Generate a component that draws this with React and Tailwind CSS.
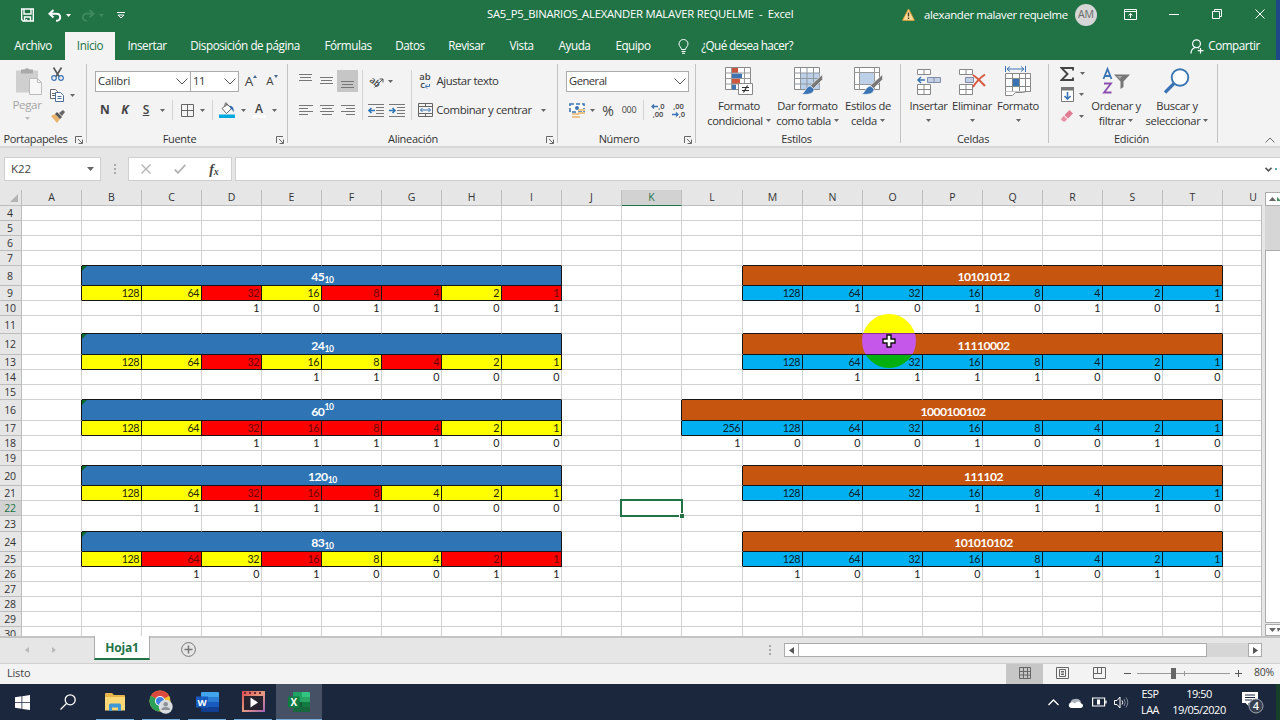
const COLS = 'ABCDEFGHIJKLMNOPQRSTU'.split('');
const colWidth = (c) => (c === 'L' ? 61 : c === 'U' ? 39 : 60);

const ROW_HEIGHTS = {
  8: 20, 11: 18, 12: 21, 16: 21, 20: 20, 23: 16, 24: 20,
};
const ROWS = Array.from({ length: 27 }, (_, i) => i + 4);
const rowHeight = (r) => ROW_HEIGHTS[r] || 15;

// each block: a merged title, the powers of two and the bits below them
const BLOCKS = [
  { row: 8, from: 'B', to: 'I', num: '45', sub: '10', red: 'DFGI', bits: '101101' },
  { row: 12, from: 'B', to: 'I', num: '24', sub: '10', red: 'DG', bits: '11000' },
  { row: 16, from: 'B', to: 'I', num: '60', sup: '10', red: 'DEFG', bits: '111100' },
  { row: 20, from: 'B', to: 'I', num: '120', sub: '10', red: 'DEF', bits: '1111000' },
  { row: 24, from: 'B', to: 'I', num: '83', sub: '10', red: 'CEHI', bits: '1010011' },
  { row: 8, from: 'M', to: 'T', num: '10101012', bits: '1010101' },
  { row: 12, from: 'M', to: 'T', num: '11110002', bits: '1111000' },
  { row: 16, from: 'L', to: 'T', num: '1000100102', bits: '100010010' },
  { row: 20, from: 'M', to: 'T', num: '111102', bits: '11110' },
  { row: 24, from: 'M', to: 'T', num: '101010102', bits: '10101010' },
];

const CELLS = {};
BLOCKS.forEach((b) => {
  const start = COLS.indexOf(b.from);
  const end = COLS.indexOf(b.to);
  const left = b.from === 'B';
  for (let i = start; i <= end; i++) {
    const c = COLS[i];
    const isRed = left && b.red.includes(c);
    CELLS[c + b.row] = { block: b, title: true, first: i === start };
    CELLS[c + (b.row + 1)] = {
      block: b,
      text: String(2 ** (end - i)),
      cls: isRed ? 'bg-[#fe0000] text-[#6b0505]' : left ? 'bg-[#ffff00] text-[#26260a]' : 'bg-[#00b0f0] text-[#06222e]',
    };
    const bit = b.bits[b.bits.length - 1 - (end - i)];
    if (bit) CELLS[c + (b.row + 2)] = { text: bit, cls: 'text-[#222]' };
  }
});

const spanWidth = (b) =>
  COLS.slice(COLS.indexOf(b.from), COLS.indexOf(b.to) + 1).reduce((sum, c) => sum + colWidth(c), 0);

function Caret({ className = 'text-[#666]' }) {
  return (
    <svg width="5" height="3" viewBox="0 0 5 3" className={`shrink-0 ${className}`}>
      <path d="M0 0h5L2.5 3z" fill="currentColor" />
    </svg>
  );
}

function Slot({ w, children, className = '' }) {
  return <div className={`flex shrink-0 items-center justify-center ${w} ${className}`}>{children}</div>;
}

function Divider({ w }) {
  return (
    <Slot w={w}>
      <div className="h-[20px] w-px bg-[#d4d4d4]" />
    </Slot>
  );
}

function Launcher() {
  return (
    <svg width="8" height="8" viewBox="0 0 8 8" fill="none" stroke="#666" className="mt-[4px] shrink-0">
      <path d="M.5 7V.5H7M3 3l4 4M7.500 3.500v4h-4" />
    </svg>
  );
}

function Group({ w, label, labelPad, launcher, children }) {
  return (
    <div className={`flex h-[79px] shrink-0 flex-col border-r border-[#c3c3c3] ${w}`}>
      <div className="h-[68px]">{children}</div>
      <div className="flex h-[11px] items-start justify-between pr-[3px] leading-[14px] text-[#333]">
        <div className={`flex-1 text-center whitespace-nowrap text-[11px] tracking-[-0.300px] ${labelPad}`}>{label}</div>
        {launcher && <Launcher />}
      </div>
    </div>
  );
}

function BigButton({ w, icon, line1, line2 }) {
  return (
    <div className={`flex shrink-0 flex-col items-center text-[11.200px] tracking-[-0.350px] whitespace-nowrap text-[#333] ${w}`}>
      <div className="flex h-[34px] items-center">{icon}</div>
      <div className="h-[15px] leading-[15px]">{line1}</div>
      <div className="flex h-[15px] items-center gap-[3px] leading-[15px]">
        {line2}
        <Caret />
      </div>
    </div>
  );
}

function Lines({ rows }) {
  return (
    <svg width="14" height="14" viewBox="0 0 14 14" stroke="#777" strokeWidth="1">
      {rows.map(([x1, x2, y]) => (
        <path key={y} d={`M${x1} ${y}.5H${x2}`} />
      ))}
    </svg>
  );
}

function Indent({ flip }) {
  return (
    <svg width="16" height="13" viewBox="0 0 16 13" fill="none">
      <path d="M0 .5h16M8 3.500h8M8 6.500h8M8 9.500h8M0 12.500h16" stroke="#777" />
      <path d={flip ? 'M0 6.500h6M3.500 4L6 6.500 3.500 9' : 'M7 6.500H1M3.500 4L1 6.500 3.500 9'} stroke="#2f75b5" strokeWidth="1.600" />
    </svg>
  );
}

function TitleBar() {
  return (
    <div className="flex h-[32px] items-center text-[12px] text-white">
      <div className="flex h-full w-[487px] items-center pb-[2px] pl-[20px]">
        <svg width="15" height="14" viewBox="0 0 15 14" fill="none" stroke="#fff" strokeWidth="1.400">
          <path d="M1.700 1h11.600v12H3l-1.300-1.500zM4 1v5h7V1M4.500 13V9h6v4M6.500 11v2" />
        </svg>
        <svg width="14" height="13" viewBox="0 0 14 13" fill="none" stroke="#fff" strokeWidth="2" className="ml-[13px]">
          <path d="M5.500 1L1.500 4.700l4 3.700M2 4.700h6.500c5 0 5 7-.5 7" />
        </svg>
        <Caret className="ml-[4px] text-white" />
        <svg width="14" height="13" viewBox="0 0 14 13" fill="none" stroke="#3f8a61" strokeWidth="1.800" className="ml-[10px]">
          <path d="M8.500 1l4 3.700-4 3.700M12 4.700H5.500c-5 0-5 7 .5 7" />
        </svg>
        <Caret className="ml-[4px] text-[#3f8a61]" />
        <svg width="8" height="7" viewBox="0 0 8 7" fill="none" stroke="#fff" className="ml-[13px]">
          <path d="M0 .5h8M1 3l3 3 3-3z" />
        </svg>
      </div>
      <div className="w-[306px] text-center text-[11.300px] tracking-[-0.250px] whitespace-nowrap pb-[3px]">
        SA5_P5_BINARIOS_ALEXANDER MALAVER REQUELME&nbsp; - &nbsp;Excel
      </div>
      <svg width="13" height="13" viewBox="0 0 13 13" className="mb-[4px] ml-[109px] shrink-0">
        <path d="M6.500 1L12.300 12.300H.7z" fill="#fbdc9a" stroke="#e8a33d" />
        <path d="M6.500 4.500v4M6.500 9.500v1.500" stroke="#4a3a20" strokeWidth="1.400" />
      </svg>
      <div className="ml-[9px] w-[142px] shrink-0 text-center text-[11.400px] tracking-[-0.350px] whitespace-nowrap pb-[2px]">alexander malaver requelme</div>
      <div className="mb-[3px] ml-[9px] flex size-[22px] shrink-0 items-center justify-center rounded-full bg-[#d6d6d6] text-[10.500px] text-[#6b6b6b]">AM</div>
      <svg width="13" height="11" viewBox="0 0 13 11" fill="none" stroke="#fff" className="mb-[4px] ml-[27px] shrink-0">
        <path d="M.5.5h12v10H.5zM.5 2.500h12M6.500 9V4.500M4.500 6.500l2-2 2 2" />
      </svg>
      <div className="mb-[3px] ml-[32px] h-px w-[10px] shrink-0 bg-white" />
      <svg width="10" height="10" viewBox="0 0 10 10" fill="none" stroke="#fff" className="mb-[4px] ml-[33px] shrink-0">
        <path d="M.5 2.500h7v7h-7zM2.500 2.500v-2h7v7h-2" />
      </svg>
      <svg width="10" height="10" viewBox="0 0 10 10" fill="none" stroke="#fff" className="mb-[4px] ml-[33px] shrink-0">
        <path d="M.5.5l9 9M9.500.5l-9 9" />
      </svg>
    </div>
  );
}

const TABS = [
  ['Archivo', 'w-[64px]'],
  ['Inicio', 'w-[50px] bg-[#f3f3f3] text-[#217346]'],
  ['Insertar', 'w-[64px]'],
  ['Disposición de página', 'w-[132px]'],
  ['Fórmulas', 'w-[74px]'],
  ['Datos', 'w-[50px]'],
  ['Revisar', 'w-[63px]'],
  ['Vista', 'w-[47px]'],
  ['Ayuda', 'w-[59px]'],
  ['Equipo', 'w-[58px]'],
];

function RibbonTabs() {
  return (
    <div className="flex h-[28px] items-center pl-px text-[11.700px] tracking-[-0.450px] text-white">
      {TABS.map(([name, cls]) => (
        <div key={name} className={`flex h-full shrink-0 items-center justify-center whitespace-nowrap ${cls}`}>{name}</div>
      ))}
      <svg width="11" height="15" viewBox="0 0 11 15" fill="none" stroke="#fff" className="ml-[16px] shrink-0">
        <path d="M3.500 10.500C3.500 8.500 1 7.500 1 5a4.500 4.500 0 019 0c0 2.500-2.500 3.500-2.500 5.500zM3.500 12.500h4M4 14.300h3" />
      </svg>
      <div className="ml-[12px] w-[92px] text-center tracking-[-0.600px] whitespace-nowrap">¿Qué desea hacer?</div>
      <svg width="14" height="15" viewBox="0 0 14 15" fill="none" stroke="#fff" strokeWidth="1.200" className="ml-[397px] shrink-0">
        <circle cx="6.500" cy="4.700" r="3.900" />
        <path d="M1 14.500c0-3 1.500-5 4-6M8 8.600l1 .8M10.500 9v5.500M7.700 11.700h5.800" />
      </svg>
      <div className="ml-[4px] w-[52px] text-center">Compartir</div>
    </div>
  );
}

function TableIcon({ kind }) {
  return (
    <svg width="30" height="30" viewBox="0 0 30 30" fill="none">
      <path d="M1.500 1.500h25v22h-25z" fill="#fff" stroke="#888" />
      {kind === 'cond' && (
        <>
          <path d="M8 2h6v5H8z" fill="#c8553d" />
          <path d="M8 7.500h10v5H8z" fill="#3f74b0" />
          <path d="M8 13h8v5H8z" fill="#d0583f" />
          <path d="M8 18.500h4v5H8z" fill="#3f74b0" />
          <path d="M1.500 7h25M1.500 12.500h25M1.500 18h25M7.500 1.500v22M20.500 1.500v22" stroke="#999" />
          <path d="M14.500 17.500h14v11h-14z" fill="#fff" stroke="#888" />
          <path d="M18 21.500h7M18 24.500h7M23.500 19.500l-4 7" stroke="#333" strokeWidth="1.200" />
        </>
      )}
      {kind === 'table' && (
        <>
          <path d="M7.500 7h19v16h-19z" fill="#bcd0ea" />
          <path d="M1.500 7h25M1.500 12.500h25M1.500 18h25M7.500 1.500v22M14 1.500v22M20.500 1.500v22" stroke="#8f979f" />
        </>
      )}
      {kind === 'style' && (
        <>
          <path d="M6.500 6.500h15v12h-15z" fill="#bcd0ea" />
          <path d="M1.500 6.500h25M1.500 18.500h25M6.500 1.500v22M21.500 1.500v22" stroke="#999" />
        </>
      )}
      {kind !== 'cond' && (
        <>
          <path d="M29.500 8.500v5l-9 9-3-3z" fill="#777" stroke="#f3f3f3" strokeWidth=".6" />
          <path d="M17.500 20l3.500 3c0 5-7 6-12.500 5 4-1 3.500-7 9-8z" fill="#3a74b4" stroke="#f3f3f3" strokeWidth=".6" />
        </>
      )}
    </svg>
  );
}

function Ribbon() {
  return (
    <div className="flex h-[88px] shrink-0 border-b-2 border-[#d6d6d6] bg-[#f3f3f3] pt-[4px]">
      <Group w="w-[87px]" label="Portapapeles" labelPad="pr-[4px]" launcher>
        <div className="flex">
          <div className="flex w-[48px] flex-col pt-[3px] pl-[8px] text-[#a5a5a5]">
            <div className="flex w-[38px] flex-col items-center">
              <svg width="28" height="29" viewBox="0 0 28 29" fill="none" className="ml-[4px]">
                <path d="M1 3.500h22v22H1z" fill="#cfcfcf" />
                <path d="M6 2.500h3.500a3 3 0 015 0H18v4H6z" fill="#a9a9a9" />
                <path d="M14.500 11.500h8l4 4v12h-12zM22.500 11.500v4h4" fill="#f7f7f7" stroke="#bbb" />
              </svg>
              <div className="h-[21px] pt-[2px] text-[11.500px] leading-[14px] tracking-[-0.300px]">Pegar</div>
              <Caret className="text-[#bbb]" />
            </div>
          </div>
          <div className="flex w-[38px] flex-col">
            <div className="flex h-[20px] items-center pl-[3px]">
              <svg width="13" height="14" viewBox="0 0 13 14" fill="none">
                <path d="M2.500.5l5.500 9M10.500.5L5 9.500" stroke="#555" strokeWidth="1.600" />
                <circle cx="3" cy="11" r="2.300" stroke="#3a74b4" strokeWidth="1.200" />
                <circle cx="10" cy="11" r="2.300" stroke="#3a74b4" strokeWidth="1.200" />
              </svg>
            </div>
            <div className="flex h-[22px] items-center gap-[6px] pl-[2px]">
              <svg width="14" height="13" viewBox="0 0 14 13" fill="#fff" stroke="#666">
                <path d="M.5.5h5l2 2v7h-7zM2 4.500h4M2 6.500h4" />
                <path d="M5.500 3.500h5l3 3v6h-8zM7.500 7.500h4M7.500 9.500h4" stroke="#4c6f99" />
              </svg>
              <Caret />
            </div>
            <div className="flex h-[20px] items-center pl-[3px]">
              <svg width="14" height="13" viewBox="0 0 14 13">
                <path d="M0 6l4-2 5 5-3 4z" fill="#e8b36a" />
                <path d="M4 4l2-2 5 5-2 2z" fill="#555" />
                <path d="M8 3l4-3 2 2-3 4z" fill="#666" />
              </svg>
            </div>
          </div>
        </div>
      </Group>

      <Group w="w-[201px]" label="Fuente" labelPad="pr-[4px]" launcher>
        <div className="flex h-[34px] items-center pl-[8px] text-[#333]">
          <div className="flex h-[21px] w-[96px] items-center justify-between border border-[#ababab] bg-white px-[2px] text-[11.300px] tracking-[-0.200px]">
            Calibri
            <svg width="12" height="7" viewBox="0 0 12 7" fill="none" stroke="#555"><path d="M.5.5L6 6 11.500.5" /></svg>
          </div>
          <div className="-ml-px flex h-[21px] w-[49px] items-center justify-between border border-[#ababab] bg-white px-[2px] text-[11.300px] tracking-[-0.500px]">
            11
            <svg width="12" height="7" viewBox="0 0 12 7" fill="none" stroke="#555"><path d="M.5.5L6 6 11.500.5" /></svg>
          </div>
          <Slot w="w-[24px]" className="text-[13.500px] text-[#444]">
            A<svg width="4" height="3" viewBox="0 0 4 3" className="mb-[10px]"><path d="M0 3h4L2 0z" fill="#47698f" /></svg>
          </Slot>
          <Slot w="w-[18px]" className="text-[11.500px] text-[#444]">
            A<svg width="4" height="3" viewBox="0 0 4 3" className="mb-[10px]"><path d="M0 0h4L2 3z" fill="#47698f" /></svg>
          </Slot>
        </div>
        <div className="flex h-[24px] items-center pl-[8px] text-[12px] text-[#444]">
          <Slot w="w-[20px]" className="font-bold">N</Slot>
          <Slot w="w-[20px]" className="font-bold italic">K</Slot>
          <Slot w="w-[22px]" className="underline font-semibold">S</Slot>
          <Slot w="w-[10px]"><Caret /></Slot>
          <Divider w="w-[11px]" />
          <Slot w="w-[18px]">
            <svg width="13" height="13" viewBox="0 0 13 13" fill="none" stroke="#666"><path d="M.5.5h12v12H.5zM6.500 0v13M0 6.500h13" /></svg>
          </Slot>
          <Slot w="w-[12px]"><Caret /></Slot>
          <Divider w="w-[9px]" />
          <Slot w="w-[20px]">
            <svg width="16" height="16" viewBox="0 0 16 16" fill="none">
              <path d="M3 6.500l5-4.500 4.500 4.500-5 5z" fill="#fff" stroke="#666" />
              <path d="M6 5V1.500q1-1.500 2 0V4" stroke="#666" />
              <path d="M10.500 3.500q5 .5 4 7-.8-3-3-4z" fill="#2f6da8" />
              <path d="M0 12.500h16V16H0z" fill="#00a9e0" />
            </svg>
          </Slot>
          <Slot w="w-[12px]"><Caret /></Slot>
          <Slot w="w-[20px]" className="flex-col">
            <span className="leading-[12px] font-semibold">A</span>
            <div className="h-[3px] w-[14px] bg-white" />
          </Slot>
          <Slot w="w-[11px]"><Caret /></Slot>
        </div>
      </Group>

      <Group w="w-[270px]" label="Alineación" labelPad="pr-[8px]" launcher>
        <div className="flex pl-[7px] text-[11.500px] text-[#333]">
          <div className="w-[63px]">
            <div className="flex h-[34px] items-center">
              <Slot w="w-[21px]" className="pb-[4px]"><Lines rows={[[0, 13, 2], [1, 12, 5], [0, 13, 8]]} /></Slot>
              <Slot w="w-[21px]"><Lines rows={[[0, 13, 3], [1, 12, 6], [0, 13, 9]]} /></Slot>
              <Slot w="w-[21px]" className="h-[22px] bg-[#c6c6c6] pt-[6px]"><Lines rows={[[0, 13, 4], [1, 12, 7], [0, 13, 10]]} /></Slot>
            </div>
            <div className="flex h-[24px] items-center">
              <Slot w="w-[21px]"><Lines rows={[[0, 14, 2], [0, 9, 5], [0, 14, 8], [0, 9, 11]]} /></Slot>
              <Slot w="w-[21px]"><Lines rows={[[0, 14, 2], [2, 12, 5], [0, 14, 8], [2, 12, 11]]} /></Slot>
              <Slot w="w-[21px]"><Lines rows={[[0, 14, 2], [5, 14, 5], [0, 14, 8], [5, 14, 11]]} /></Slot>
            </div>
          </div>
          <Slot w="w-[8px]"><div className="mt-[4px] h-[50px] w-px bg-[#d4d4d4]" /></Slot>
          <div className="w-[42px]">
            <div className="flex h-[34px] items-center">
              <Slot w="w-[20px]">
                <svg width="18" height="18" viewBox="0 0 18 18" fill="none" stroke="#555">
                  <text x="3" y="10" fontSize="9" fontWeight="600" fill="#444" stroke="none" transform="rotate(40 4 8)">ab</text>
                  <path d="M7.500 15.500l8.500-8.500M12.500 7h3.500v3.500" />
                </svg>
              </Slot>
              <Slot w="w-[8px]"><Caret /></Slot>
            </div>
            <div className="flex h-[24px] items-center">
              <Slot w="w-[20px]"><Indent /></Slot>
              <Slot w="w-[22px]"><Indent flip /></Slot>
            </div>
          </div>
          <Slot w="w-[6px]"><div className="mt-[4px] h-[50px] w-px bg-[#d4d4d4]" /></Slot>
          <div>
            <div className="flex h-[34px] items-center">
              <Slot w="w-[22px]" className="flex-col text-[9.500px] leading-[8px] font-semibold text-[#444]">
                <span>ab</span>
                <span className="flex items-end">
                  c
                  <svg width="5" height="5" viewBox="0 0 5 5" fill="none" stroke="#3a74b4"><path d="M4.500 0v2.500H.5M2 .5l-2 2 2 2" /></svg>
                </span>
              </Slot>
              <div className="w-[63px] text-center text-[11.400px] tracking-[-0.450px] whitespace-nowrap">Ajustar texto</div>
            </div>
            <div className="flex h-[24px] items-center">
              <Slot w="w-[22px]">
                <svg width="15" height="14" viewBox="0 0 15 14" fill="none" stroke="#666">
                  <path d="M.5.5h14v13H.5zM.5 3.500h14M.5 10.500h14M7.500 .5v3M7.500 10.500v3" />
                  <path d="M2.500 7h10M4.500 5l-2 2 2 2M10.500 5l2 2-2 2" stroke="#3a74b4" />
                </svg>
              </Slot>
              <div className="w-[96px] text-center text-[11.400px] tracking-[-0.400px] whitespace-nowrap">Combinar y centrar</div>
              <Slot w="w-[22px]"><Caret /></Slot>
            </div>
          </div>
        </div>
      </Group>

      <Group w="w-[138px]" label="Número" labelPad="pr-[4px]" launcher>
        <div className="flex h-[34px] items-center pl-[8px] text-[12px] text-[#333]">
          <div className="flex h-[21px] w-[123px] items-center justify-between border border-[#ababab] bg-white px-[2px] text-[11.200px] tracking-[-0.500px]">
            General
            <svg width="12" height="7" viewBox="0 0 12 7" fill="none" stroke="#555"><path d="M.5.5L6 6 11.500.5" /></svg>
          </div>
        </div>
        <div className="flex h-[24px] items-center pl-[8px] text-[#444]">
          <Slot w="w-[22px]">
            <svg width="17" height="15" viewBox="0 0 17 15" fill="none">
              <path d="M1 1h14v8H1z" fill="#fff" stroke="#3a74b4" strokeWidth="1.600" strokeDasharray="4 2" />
              <circle cx="8" cy="5" r="2" fill="#3a74b4" />
              <path d="M9 6h7v2H9zM9 9h7v2H9zM3 10h7v2H3zM3 13h8v2H3z" fill="#ecc489" />
            </svg>
          </Slot>
          <Slot w="w-[8px]"><Caret /></Slot>
          <Slot w="w-[24px]" className="text-[14px]">%</Slot>
          <Slot w="w-[18px]" className="text-[9px] tracking-[-0.300px]">000</Slot>
          <Divider w="w-[10px]" />
          <Slot w="w-[20px]" className="flex-col text-[7.500px] leading-[8px] font-semibold">
            <span className="flex items-center"><svg width="7" height="5" viewBox="0 0 7 5" fill="none" stroke="#3a74b4" strokeWidth="1.300"><path d="M7 2.500H1M3 .5l-2 2 2 2" /></svg>,0</span>
            <span>,00</span>
          </Slot>
          <Slot w="w-[21px]" className="flex-col text-[7.500px] leading-[8px] font-semibold">
            <span>,00</span>
            <span className="flex items-center"><svg width="7" height="5" viewBox="0 0 7 5" fill="none" stroke="#3a74b4" strokeWidth="1.300"><path d="M0 2.500h6M4 .5l2 2-2 2" /></svg>,0</span>
          </Slot>
        </div>
      </Group>

      <Group w="w-[205px]" label="Estilos" labelPad="">
        <div className="flex pl-[10px]">
          <BigButton w="w-[66px]" icon={<TableIcon kind="cond" />} line1="Formato" line2="condicional" />
          <BigButton w="w-[71px]" icon={<TableIcon kind="table" />} line1="Dar formato" line2="como tabla" />
          <BigButton w="w-[50px]" icon={<TableIcon kind="style" />} line1="Estilos de" line2="celda" />
        </div>
      </Group>

      <Group w="w-[148px]" label="Celdas" labelPad="">
        <div className="flex pl-[6px]">
          <BigButton
            w="w-[43px]"
            line1="Insertar"
            icon={
              <svg width="26" height="27" viewBox="0 0 26 27" fill="#fff" stroke="#888">
                <path d="M1.500 1.500h13v5h-13zM8 1.500v5M1.500 16.500h13v10h-13zM8 16.500v10M1.500 21.500h13" />
                <path d="M11.500 9.500h13v5h-13zM18 9.500v5" fill="#c5cfe4" stroke="#7f8da8" />
                <path d="M9 12H2M5 9l-3 3 3 3" fill="none" stroke="#3a74b4" strokeWidth="1.500" />
              </svg>
            }
          />
          <BigButton
            w="w-[44px]"
            line1="Eliminar"
            icon={
              <svg width="28" height="27" viewBox="0 0 28 27" fill="#fff" stroke="#888">
                <path d="M1.500 1.500h13v5h-13zM8 1.500v5M1.500 16.500h13v10h-13zM8 16.500v10M1.500 21.500h13" />
                <path d="M7.500 9.500h8v5h-8z" fill="#c5cfe4" stroke="#7f8da8" />
                <path d="M15 7q6 4 12 11M27 6.500Q20 11 15 19" fill="none" stroke="#d75a40" strokeWidth="2" />
              </svg>
            }
          />
          <BigButton
            w="w-[48px]"
            line1="Formato"
            icon={
              <svg width="28" height="30" viewBox="0 0 28 30" fill="none" stroke="#888">
                <path d="M1.500 7.500h25v18h-25zM8.500 7.500v18M15.500 7.500v18M21.500 7.500v18M1.500 12.500h25M1.500 20.500h25" fill="#fff" />
                <path d="M8.500 12.500h7v8h-7z" fill="#3a74b4" />
                <path d="M1.500 25.500v4h7l3-3h7l4-1" fill="#fff" />
                <path d="M1.500 0v6M21.500 0v6M3 3h17M6 .5L3 3l3 2.500M17 .5L20 3l-3 2.500" stroke="#3a74b4" />
              </svg>
            }
          />
        </div>
      </Group>

      <Group w="w-[169px]" label="Edición" labelPad="">
        <div className="flex pl-[6px]">
          <div className="flex w-[34px] flex-col">
            <div className="flex h-[19px] items-center">
              <Slot w="w-[24px]">
                <svg width="14" height="14" viewBox="0 0 14 14" fill="none" stroke="#444" strokeWidth="1.900"><path d="M13 3.500V1H1.500l6 6-6 6H13v-2.500" /></svg>
              </Slot>
              <Slot w="w-[6px]"><Caret /></Slot>
            </div>
            <div className="flex h-[23px] items-center">
              <Slot w="w-[24px]">
                <svg width="13" height="15" viewBox="0 0 13 15" fill="none">
                  <path d="M.5.5h12v14H.5z" fill="#fff" stroke="#777" />
                  <path d="M0 0h13v3.500H0z" fill="#777" />
                  <path d="M6.500 5v7M3.500 9l3 3 3-3" stroke="#3a74b4" strokeWidth="1.600" />
                </svg>
              </Slot>
              <Slot w="w-[4px]"><Caret /></Slot>
            </div>
            <div className="flex h-[20px] items-center">
              <Slot w="w-[22px]">
                <svg width="13" height="12" viewBox="0 0 13 12">
                  <path d="M4.500 5l5-5L13 3.500l-5 5z" fill="#e07b93" />
                  <path d="M3.800 5.700l3.500 3.500L5 11.500H3L.7 9.200z" fill="#ea94a8" />
                </svg>
              </Slot>
              <Slot w="w-[8px]"><Caret /></Slot>
            </div>
          </div>
          <BigButton
            w="w-[54px]"
            line1="Ordenar y"
            line2="filtrar"
            icon={
              <svg width="28" height="28" viewBox="0 0 28 28" fill="none">
                <path d="M1.500 12L5.500 2l4 10M3 9h5" stroke="#3a74b4" strokeWidth="1.800" />
                <path d="M2 16.500h7L2 25.500h7.500" stroke="#8c4fb0" strokeWidth="1.800" />
                <path d="M12 7.500h16l-6.500 7V20l-3 2v-7.500z" fill="#777" />
                <path d="M15 9h5l-2 3z" fill="#aaa" />
              </svg>
            }
          />
          <BigButton
            w="w-[68px]"
            line1="Buscar y"
            line2="seleccionar"
            icon={
              <svg width="28" height="28" viewBox="0 0 28 28" fill="none" stroke="#3a74b4">
                <circle cx="17" cy="10.500" r="8.300" strokeWidth="1.900" fill="#fdfdfd" />
                <path d="M11 16.500L2 25.500" strokeWidth="3.200" />
              </svg>
            }
          />
        </div>
      </Group>
      <div className="flex flex-1 items-end justify-end pr-[5px] pb-[3px]">
        <svg width="10" height="6" viewBox="0 0 10 6" fill="none" stroke="#666"><path d="M.5 5.500L5 1l4.500 4.500" /></svg>
      </div>
    </div>
  );
}

function FormulaBar() {
  return (
    <div className="flex h-[42px] shrink-0 items-start bg-[#e6e6e6] pt-[9px] text-[#444]">
      <div className="ml-[4px] flex h-[24px] w-[97px] items-center justify-between border border-[#cfcfcf] bg-white pr-[6px] pl-[6px] text-[11.500px] tracking-[-0.100px]">
        K22
        <svg width="7" height="4" viewBox="0 0 7 4"><path d="M0 0h7L3.500 4z" fill="#666" /></svg>
      </div>
      <Slot w="w-[27px]" className="h-[24px] flex-col gap-[2px]">
        <div className="size-[2px] bg-[#aaa]" />
        <div className="size-[2px] bg-[#aaa]" />
        <div className="size-[2px] bg-[#aaa]" />
      </Slot>
      <div className="flex h-[24px] w-[104px] items-center border border-[#cfcfcf] bg-white">
        <Slot w="w-[34px]">
          <svg width="10" height="10" viewBox="0 0 10 10" stroke="#b5b5b5" strokeWidth="1.400"><path d="M.5.5l9 9M9.500.5l-9 9" /></svg>
        </Slot>
        <Slot w="w-[34px]">
          <svg width="12" height="10" viewBox="0 0 12 10" fill="none" stroke="#b5b5b5" strokeWidth="1.900"><path d="M.8 5.500L4 8.800 11.300.8" /></svg>
        </Slot>
        <Slot w="w-[34px]" className="font-['Liberation_Serif',serif] text-[14px] font-bold italic">
          f<span className="pt-[4px] text-[10px]">x</span>
        </Slot>
      </div>
      <div className="ml-[3px] flex h-[24px] flex-1 items-center justify-end gap-[3px] border border-r-0 border-[#cfcfcf] bg-white pr-[3px]">
        <svg width="7" height="5" viewBox="0 0 7 5" fill="none" stroke="#555" strokeWidth="1.600"><path d="M.5.8l3 3 3-3" /></svg>
        <div className="size-[2px] bg-[#5fa8b5]" />
      </div>
    </div>
  );
}

function Cell({ col, row }) {
  const i = COLS.indexOf(col);
  const cell = CELLS[col + row];
  if (cell?.title && !cell.first) return null;

  const next = CELLS[COLS[i + 1] + row];
  const below = CELLS[col + (row + 1)];
  const right = cell?.block || next?.block ? 'border-r-[#151515]' : 'border-r-[#d2d2d2]';
  const bottom = cell?.block || below?.block ? 'border-b-[#151515]' : 'border-b-[#d2d2d2]';

  if (cell?.title) {
    const { block } = cell;
    const blue = block.from === 'B';
    return (
      <div
        className={`relative flex shrink-0 items-center justify-center border-r border-b border-[#151515] pt-[4px] pl-[2px] text-[12.200px] leading-none font-bold tracking-[-0.550px] text-white ${blue ? 'bg-[#2f75b5]' : 'bg-[#c6560f]'}`}
        style={{ width: spanWidth(block) }}
      >
        {blue && (
          <svg width="5" height="5" viewBox="0 0 5 5" className="absolute top-0 left-0"><path d="M0 0h5L0 5z" fill="#0c6b2c" /></svg>
        )}
        {block.num}
        {block.sub && <span className="pt-[6px] text-[8.500px] tracking-[-0.300px]">{block.sub}</span>}
        {block.sup && <span className="pb-[9px] text-[8.500px] tracking-[-0.300px]">{block.sup}</span>}
      </div>
    );
  }

  return (
    <div
      className={`relative flex shrink-0 items-center justify-end border-r border-b pt-px pr-[2px] text-[10.700px] leading-none tracking-[-0.450px] ${right} ${bottom} ${cell?.cls || ''}`}
      style={{ width: colWidth(col) }}
    >
      {cell?.text}
      {col === 'K' && row === 22 && (
        <div className="absolute -top-[2px] -right-[2px] -bottom-[2px] -left-[2px] z-10 border-2 border-[#217346]">
          <div className="absolute -right-[3px] -bottom-[3px] size-[5px] border-t border-l border-white bg-[#217346]" />
        </div>
      )}
    </div>
  );
}

function Sheet() {
  return (
    <div className="relative w-[1262px] shrink-0 font-[Lato,sans-serif]">
      <div className="flex h-[16px] bg-[#e6e6e6] font-['Open_Sans',sans-serif] text-[10.500px] leading-none text-[#333]">
        <div className="flex w-[22px] shrink-0 items-end justify-end border-r border-b border-[#bdbdbd] pr-[3px] pb-[3px]">
          <svg width="8" height="8" viewBox="0 0 8 8"><path d="M8 0v8H0z" fill="#b4b4b4" /></svg>
        </div>
        {COLS.map((c) => (
          <div
            key={c}
            className={`flex shrink-0 items-center border-r border-b pb-px ${
              c === 'K' ? 'border-r-[#bdbdbd] border-b-[#217346] bg-[#d2d2d2] text-[#217346]' : 'border-[#bdbdbd]'
            } ${c === 'U' ? 'justify-end border-r-transparent pr-[5px]' : 'justify-center'}`}
            style={{ width: colWidth(c) + (c === 'U' ? 1 : 0) }}
          >
            {c}
          </div>
        ))}
      </div>
      <div className="h-[430px] overflow-hidden border-r border-[#bdbdbd] bg-white">
        {ROWS.map((r) => (
          <div key={r} className="flex" style={{ height: rowHeight(r) }}>
            <div
              className={`flex w-[22px] shrink-0 items-center justify-center border-r border-b border-[#bdbdbd] pt-px pr-px font-['Open_Sans',sans-serif] text-[10.500px] leading-none tracking-[-0.200px] ${
                r === 22 ? 'bg-[#d2d2d2] text-[#217346]' : 'bg-[#e6e6e6] text-[#333]'
              }`}
            >
              {r}
            </div>
            {COLS.map((c) => (
              <Cell key={c} col={c} row={r} />
            ))}
          </div>
        ))}
      </div>
      {/* highlighted mouse pointer */}
      <div className="absolute top-[124px] left-[862px] flex size-[54px] items-center justify-center rounded-full bg-[linear-gradient(#ffff00_0_19px,#8a2f9e_19px_20px,#c558ea_20px_40px,#3b1450_40px_41px,#04b010_41px)]">
        <svg width="14" height="14" viewBox="0 0 14 14" fill="#fff" stroke="#111" strokeWidth="1.400">
          <path d="M5 1h4v4h4v4H9v4H5V9H1V5h4z" />
        </svg>
      </div>
    </div>
  );
}

function VerticalScroll() {
  return (
    <div className="ml-[3px] flex flex-1 flex-col bg-[#e6e6e6] pt-[2px]">
      <div className="flex h-[14px] items-center gap-px border border-r-0 border-[#ababab] bg-white pl-[3px]">
        <svg width="7" height="4" viewBox="0 0 7 4"><path d="M0 4h7L3.500 0z" fill="#666" /></svg>
        <svg width="4" height="4" viewBox="0 0 4 4"><path d="M0 0l4 4H0z" fill="#3f8a61" /></svg>
      </div>
      <div className="h-[44px] bg-[#d6d6d6]" />
      <div className="flex-1 border border-r-0 border-[#ababab] bg-white" />
      <div className="mt-[1px] flex h-[12px] items-center gap-px border border-r-0 border-[#ababab] bg-white pl-[3px]">
        <svg width="7" height="4" viewBox="0 0 7 4"><path d="M0 0h7L3.500 4z" fill="#666" /></svg>
        <svg width="4" height="4" viewBox="0 0 4 4"><path d="M0 0h4L1 4z" fill="#666" /></svg>
      </div>
    </div>
  );
}

function SheetTabs() {
  return (
    <div className="flex h-[27px] shrink-0 border-t-2 border-[#c3c3c3] bg-[#e6e6e6]">
      <div className="flex w-[94px] items-center pb-[2px] pl-[25px]">
        <svg width="4" height="6" viewBox="0 0 4 6"><path d="M4 0v6L0 3z" fill="#b9b9b9" /></svg>
        <svg width="4" height="6" viewBox="0 0 4 6" className="ml-[23px]"><path d="M0 0v6l4-3z" fill="#b9b9b9" /></svg>
      </div>
      <div className="-mt-[2px] flex h-[24px] w-[56px] items-center justify-center border-x border-b-2 border-x-[#ababab] border-b-[#217346] bg-white pt-[2px] text-[12px] font-bold tracking-[-0.200px] text-[#217346]">Hoja1</div>
      <svg width="15" height="15" viewBox="0 0 15 15" fill="none" stroke="#777" className="mt-[4px] ml-[31px]">
        <circle cx="7.500" cy="7.500" r="6.900" />
        <path d="M7.500 3.500v8M3.500 7.500h8" strokeWidth="1.500" />
      </svg>
      <div className="ml-[572px] flex w-[4px] flex-col items-center justify-center gap-[2px] pb-[2px]">
        <div className="size-[2px] bg-[#aaa]" />
        <div className="size-[2px] bg-[#aaa]" />
        <div className="size-[2px] bg-[#aaa]" />
      </div>
      <div className="mt-[5px] ml-[12px] flex h-[14px] w-[478px] bg-[#d6d6d6]">
        <Slot w="w-[15px]" className="border border-[#ababab] bg-white">
          <svg width="5" height="7" viewBox="0 0 5 7"><path d="M5 0v7L0 3.500z" fill="#555" /></svg>
        </Slot>
        <div className="-ml-px w-[409px] border border-[#ababab] bg-white" />
        <Slot w="w-[14px]" className="ml-auto border border-[#ababab] bg-white">
          <svg width="5" height="7" viewBox="0 0 5 7"><path d="M0 0v7l5-3.500z" fill="#555" /></svg>
        </Slot>
      </div>
    </div>
  );
}

function StatusBar() {
  return (
    <div className="flex h-[21px] shrink-0 items-center border-t border-[#d0d0d0] bg-[#f3f3f3] pb-[2px] text-[11px] text-[#444]">
      <div className="w-[1006px] pl-[7px] tracking-[-0.200px]">Listo</div>
      <Slot w="w-[37px]" className="-mb-[2px] h-[20px] bg-[#c6c6c6] pb-[2px]">
        <svg width="12" height="12" viewBox="0 0 12 12" fill="none" stroke="#666"><path d="M.5.5h11v11H.5zM4.500 0v12M8.500 0v12M0 4.500h12M0 8h12" /></svg>
      </Slot>
      <Slot w="w-[38px]">
        <svg width="13" height="12" viewBox="0 0 13 12" fill="none" stroke="#666"><path d="M.5.5h12v11H.5zM3.500 2.500h6v7h-6zM5 4.500h3M5 6h3M5 7.500h3" /></svg>
      </Slot>
      <Slot w="w-[37px]">
        <svg width="13" height="12" viewBox="0 0 13 12" fill="none" stroke="#666"><path d="M.5.5h12v11H.5zM4.500.5v6M8.500.5v6M1 6.500h8" /></svg>
      </Slot>
      <div className="ml-[6px] h-px w-[7px] bg-[#555]" />
      <div className="ml-[6px] flex w-[93px] items-center">
        <div className="h-px w-[34px] bg-[#999]" />
        <div className="h-[11px] w-[5px] bg-[#666]" />
        <div className="h-px w-[8px] bg-[#999]" />
        <div className="h-[5px] w-px bg-[#999]" />
        <div className="h-px flex-1 bg-[#999]" />
      </div>
      <svg width="7" height="7" viewBox="0 0 7 7" stroke="#555" className="ml-[5px]"><path d="M3.500 0v7M0 3.500h7" /></svg>
      <div className="ml-[12px] text-[10.500px] tracking-[-0.300px] whitespace-nowrap">80%</div>
    </div>
  );
}

function AppSlot({ active, children }) {
  return (
    <div className={`flex h-full w-[46px] shrink-0 flex-col items-center ${active ? 'bg-[#465166]' : ''}`}>
      <div className="flex h-[35px] items-center">{children}</div>
      <div className={`h-px bg-[#76b0e0] ${active ? 'w-full' : 'w-[38px]'}`} />
    </div>
  );
}

function Taskbar() {
  return (
    <div className="flex h-[36px] shrink-0 items-center bg-[#1b273c] text-white">
      <svg width="15" height="15" viewBox="0 0 15 15" fill="#fff" className="ml-[15px]">
        <path d="M0 2.200L6.500 1.300V7H0zM7.300 1.200L15 0v7H7.300zM0 7.800h6.500v6L0 12.800zM7.300 7.800H15V15l-7.700-1.100z" />
      </svg>
      <svg width="16" height="16" viewBox="0 0 16 16" fill="none" stroke="#fff" strokeWidth="1.300" className="ml-[30px]">
        <circle cx="10.200" cy="5.800" r="5" />
        <path d="M6.500 9.500L.5 15.500" />
      </svg>
      <div className="ml-[16px] flex h-full w-[230px]">
        <AppSlot>
          <svg width="21" height="18" viewBox="0 0 21 18">
            <path d="M0 1q0-1 1-1h6l2 2h10q1 0 1 1v14H0z" fill="#e9b44c" />
            <path d="M0 4h20v13.500H0z" fill="#fbd876" />
            <path d="M4 18v-6q0-1.500 1.500-1.500h9Q16 10.500 16 12v6h-3v-3.500H7V18z" fill="#3f97d3" />
          </svg>
        </AppSlot>
        <AppSlot>
          <svg width="24" height="24" viewBox="0 0 24 24">
            <circle cx="11" cy="11" r="10.500" fill="#f2c230" />
            <path d="M11 11L1.900 5.700A10.500 10.500 0 0120.100 5.700z" fill="#dd4b3e" />
            <path d="M11 11L1.900 5.700A10.500 10.500 0 0010 21.500l4-7z" fill="#2c9f58" />
            <path d="M2 5.500h18.200L16 7H6z" fill="#dd4b3e" />
            <circle cx="11" cy="11" r="5" fill="#fff" />
            <circle cx="11" cy="11" r="4" fill="#3f7fe0" />
            <circle cx="16.700" cy="16.700" r="7" fill="#dadde0" />
            <circle cx="16.700" cy="14.300" r="2.300" fill="#8d9298" />
            <path d="M12.300 20q0-3 4.400-3t4.400 3z" fill="#8d9298" />
          </svg>
        </AppSlot>
        <AppSlot>
          <svg width="23" height="20" viewBox="0 0 23 20">
            <path d="M6 0h16q1 0 1 1v4.500H5V1q0-1 1-1z" fill="#41a5ee" />
            <path d="M5 5h18v5H5z" fill="#2b7cd3" />
            <path d="M5 10h18v5H5z" fill="#185abd" />
            <path d="M5 15h18v4q0 1-1 1H6q-1 0-1-1z" fill="#103f91" />
            <path d="M0 4.500h12v11H0z" fill="#185abd" />
            <text x="6" y="13.500" textAnchor="middle" fontSize="9.500" fontWeight="700" fill="#fff">W</text>
          </svg>
        </AppSlot>
        <AppSlot>
          <svg width="23" height="21" viewBox="0 0 23 21">
            <defs>
              <linearGradient id="film" x1="0" y1="0" x2="1" y2="1">
                <stop offset="0" stopColor="#dc4a4f" />
                <stop offset=".5" stopColor="#e59a80" />
                <stop offset="1" stopColor="#a35fb5" />
              </linearGradient>
            </defs>
            <path d="M0 0h23v21H0z" fill="url(#film)" />
            <path d="M2 5h19v14H2z" fill="#26232e" />
            <path d="M2 2h2M7 2h2M12 2h2M17 2h2" stroke="#6d2730" strokeWidth="2" />
            <path d="M8.500 6.500v10l7.500-5z" fill="#fff" />
          </svg>
        </AppSlot>
        <AppSlot active>
          <svg width="22" height="20" viewBox="0 0 22 20">
            <path d="M5 0h9v10H5z" fill="#21a366" />
            <path d="M14 0h7q1 0 1 1v5h-8z" fill="#33c481" />
            <path d="M14 5h8v5h-8z" fill="#2aa767" />
            <path d="M5 10h9v5H5z" fill="#185c37" />
            <path d="M14 10h8v5h-8z" fill="#107c41" />
            <path d="M5 15h17v4q0 1-1 1H5z" fill="#17683c" />
            <path d="M0 4.500h11.500v11H0z" fill="#107c41" />
            <text x="5.800" y="13.500" textAnchor="middle" fontSize="10" fontWeight="700" fill="#fff">X</text>
          </svg>
        </AppSlot>
      </div>
      <svg width="11" height="7" viewBox="0 0 11 7" fill="none" stroke="#fff" strokeWidth="1.300" className="ml-[726px] shrink-0"><path d="M.5 6l5-5 5 5" /></svg>
      <svg width="16" height="11" viewBox="0 0 16 11" className="ml-[9px] shrink-0">
        <path d="M3 8a4 4 0 014-6 4.500 4.500 0 016 3l-8 5z" fill="#a9afb8" />
        <path d="M3 11a2.800 2.800 0 010-5.500q2-1 4 1 2-3 5-1.500 1 .5 1.300 1.500A2.300 2.300 0 0113 11z" fill="#fff" />
      </svg>
      <svg width="15" height="10" viewBox="0 0 15 10" fill="none" stroke="#fff" strokeWidth="1.200" className="ml-[8px] shrink-0">
        <path d="M.6 1h12v8H.6zM14 3.500v3" />
        <path d="M5 2.500h3v5H5z" fill="#fff" stroke="none" />
      </svg>
      <svg width="15" height="13" viewBox="0 0 15 13" fill="none" stroke="#fff" className="ml-[7px] shrink-0">
        <path d="M.5 4.500H3L6 1v11L3 8.500H.5z" />
        <path d="M8 4.500q1.500 2 0 4" />
        <path d="M10 3q2.500 3.500 0 7M12 1.500q3.500 5 0 10" stroke="#7f8997" />
      </svg>
      <div className="ml-[6px] flex w-[30px] shrink-0 flex-col items-center text-[10.800px] leading-[16px] tracking-[-0.400px]">
        <span>ESP</span>
        <span>LAA</span>
      </div>
      <div className="ml-[4px] flex w-[60px] shrink-0 flex-col items-center text-[11px] leading-[16px] tracking-[-0.500px]">
        <span>19:50</span>
        <span>19/05/2020</span>
      </div>
      <svg width="24" height="24" viewBox="0 0 24 24" className="ml-[12px] shrink-0">
        <path d="M1 2h16v11H7.500v3l-3-3H1z" fill="#fff" />
        <path d="M4 5h10M4 7.500h10M4 10h7" stroke="#1b273c" />
        <circle cx="15" cy="16" r="7" fill="#38404f" stroke="#9aa2ae" />
        <text x="15" y="20" textAnchor="middle" fontSize="11" fontWeight="600" fill="#fff">4</text>
      </svg>
      <div className="ml-auto h-full w-[4px] bg-[#16402a]" />
    </div>
  );
}

export default function App() {
  return (
    <div className="flex h-[720px] w-[1280px] flex-col overflow-hidden bg-[#e6e6e6] font-['Open_Sans','Noto_Sans',sans-serif]">
      <div className="flex h-[60px] shrink-0 bg-[#217346]">
        <div className="w-[1276px] shrink-0">
          <TitleBar />
          <RibbonTabs />
        </div>
        <div className="flex-1 bg-[#1f4787]" />
      </div>
      <Ribbon />
      <FormulaBar />
      <div className="flex h-[446px] shrink-0">
        <Sheet />
        <VerticalScroll />
      </div>
      <SheetTabs />
      <StatusBar />
      <Taskbar />
    </div>
  );
}
